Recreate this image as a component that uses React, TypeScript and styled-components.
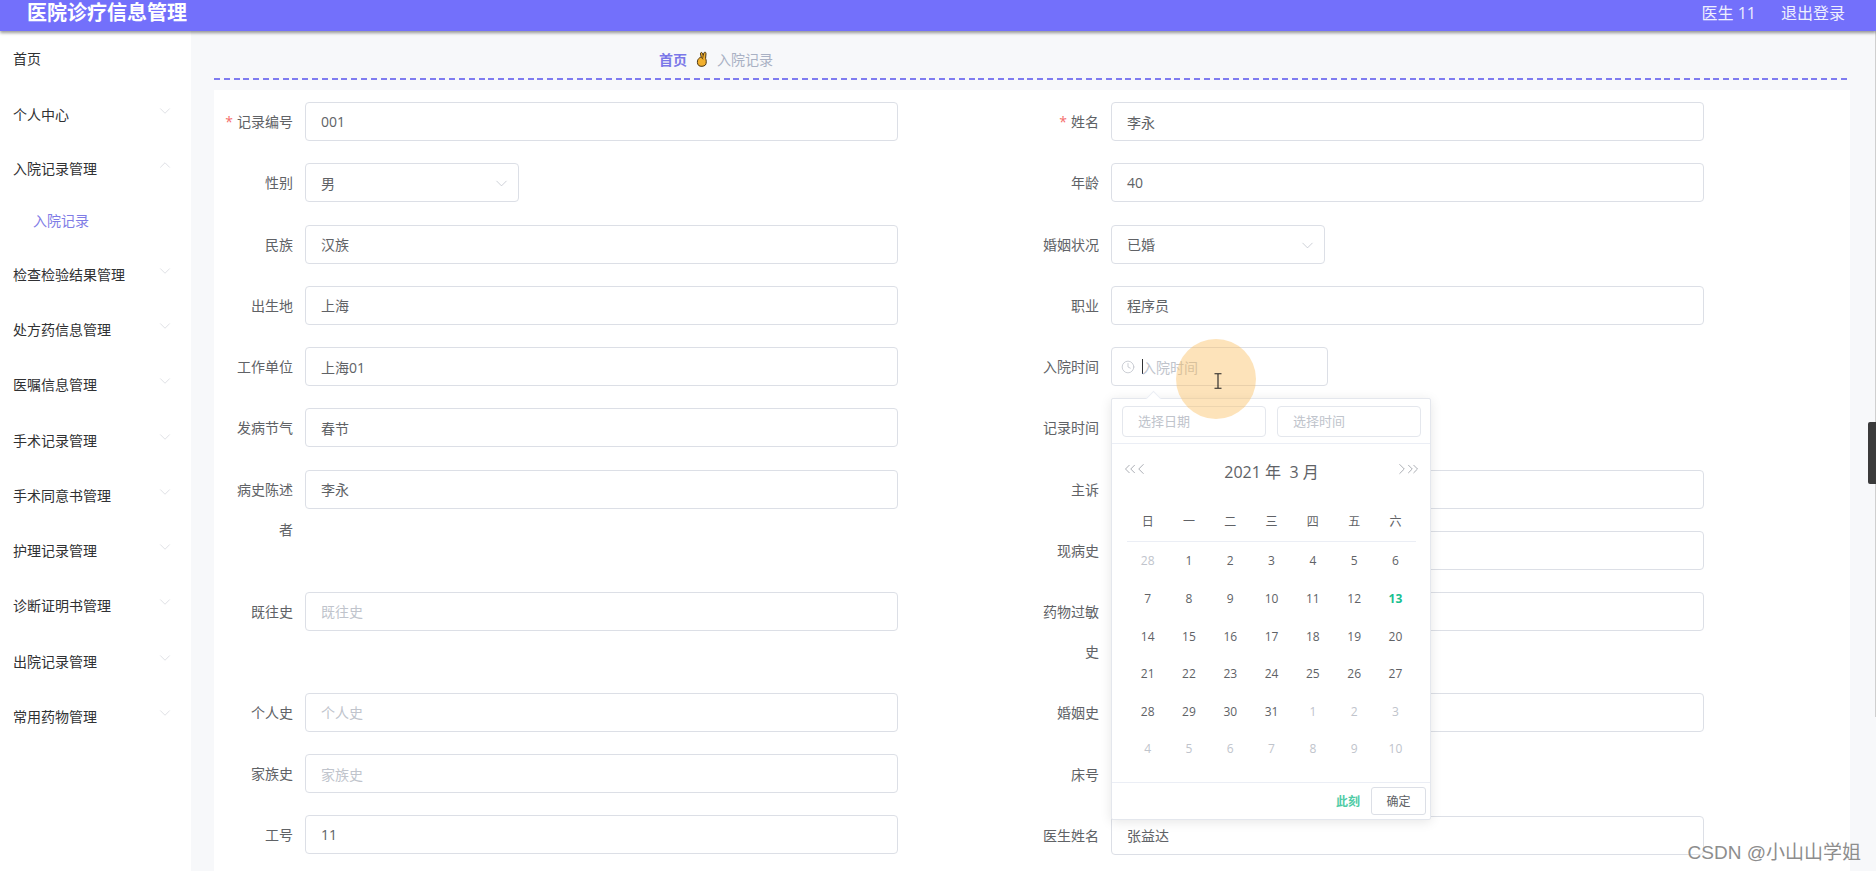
import React from 'react';
import styled, { createGlobalStyle } from 'styled-components';
import { ChevronDown, ChevronLeft, ChevronRight, ChevronsLeft, ChevronsRight, ChevronUp, Clock } from 'lucide-react';

const GlobalStyle = createGlobalStyle`
    html, body {
        margin: 0;
        padding: 0;
        background: #f7f8fa;
    }
    * {
        box-sizing: border-box;
    }
    body {
        font-family: "Open Sans", "Noto Sans CJK SC", sans-serif;
        font-size: 14px;
        color: #606266;
    }
`;

const Page = styled.div`
    position: relative;
    display: flex;
    flex-direction: column;
    height: 871px;
    overflow: hidden;
`;

const Header = styled.header`
    position: relative;
    z-index: 2;
    flex: none;
    display: flex;
    align-items: center;
    justify-content: space-between;
    height: 31px;
    padding: 0 31px 6px 27px;
    background: #7370fb;
    color: #fff;
    box-shadow: 0 2px 3px rgba(0, 0, 0, 0.4);
`;

const Title = styled.div`
    font-size: 20px;
    font-weight: 700;
    line-height: 25px;
`;

const HeaderLinks = styled.div`
    display: flex;
    gap: 25px;
    font-size: 16px;
    line-height: 22px;
    color: #eeeefe;
`;

const Body = styled.div`
    flex: 1;
    display: flex;
    min-height: 0;
`;

const Sidebar = styled.nav`
    flex: none;
    width: 191px;
    background: #fff;
`;

const MenuItem = styled.div<{ $height: number; $sub?: boolean }>`
    display: flex;
    align-items: center;
    justify-content: space-between;
    height: ${p => p.$height}px;
    padding: 0 17px 0 ${p => (p.$sub ? 33 : 13)}px;
    font-size: 14px;
    line-height: 22px;
    color: ${p => (p.$sub ? '#7f7ce6' : '#303133')};

    svg {
        margin-top: -8px;
        color: #d4d6dc;
    }
`;

const Main = styled.main`
    flex: 1;
    min-width: 0;
    padding: 0 26px 0 23px;
    background: #f7f8fa;
`;

const Breadcrumb = styled.div`
    display: flex;
    align-items: center;
    gap: 9px;
    height: 49px;
    padding: 6px 0 0 445px;
    background: repeating-linear-gradient(90deg, #7f7cf0 0 6px, transparent 6px 9.8px) left bottom / 100% 2px no-repeat;
    font-size: 14px;
`;

const CrumbHome = styled.span`
    font-weight: 700;
    color: #7a77e8;
`;

const CrumbCurrent = styled.span`
    color: #a9b1c4;
`;

const Card = styled.section`
    display: grid;
    grid-template-columns: 805px 805px;
    height: 800px;
    margin-top: 10px;
    padding-top: 12px;
    background: #fff;
`;

const Column = styled.div<{ $first?: boolean }>`
    display: flex;
    flex-direction: column;
    margin-left: ${p => (p.$first ? -1 : 0)}px;
`;

const Field = styled.div<{ $height?: number }>`
    display: flex;
    align-items: flex-start;
    flex: none;
    height: ${p => p.$height ?? 61.3}px;
    padding-left: 12px;
`;

const Label = styled.label`
    flex: none;
    width: 68px;
    margin-right: 12px;
    text-align: right;
    line-height: 40px;
    color: #606266;
`;

const Required = styled.span`
    margin-right: 4px;
    color: #f56c6c;
`;

const Control = styled.div<{ $width?: number }>`
    position: relative;
    flex: none;
    display: flex;
    align-items: center;
    width: ${p => p.$width ?? 593}px;
    height: 39px;
    padding: 0 15px;
    border: 1px solid #dcdfe6;
    border-radius: 4px;
    background: #fff;
    color: #606266;
`;

const Placeholder = styled.span`
    color: #c0c4cc;
`;

const SelectArrow = styled(ChevronDown)`
    position: absolute;
    right: 7px;
    top: 10px;
    color: #c0c4cc;
`;

const TimeWrap = styled.div`
    position: relative;
    z-index: 1;
`;

const TimeIcon = styled(Clock)`
    flex: none;
    margin: 0 7px 0 -6px;
    color: #c0c4cc;
`;

const Caret = styled.i`
    flex: none;
    width: 1px;
    height: 15px;
    margin-right: -1px;
    background: #303133;
`;

const Popover = styled.div`
    position: absolute;
    top: 51px;
    left: 0;
    width: 320px;
    height: 422px;
    border: 1px solid #e4e7ed;
    border-radius: 2px;
    background: #fff;
    box-shadow: 0 2px 12px rgba(0, 0, 0, 0.1);

    &::before {
        content: '';
        position: absolute;
        top: -6px;
        left: 36px;
        width: 10px;
        height: 10px;
        border-top: 1px solid #ebeef5;
        border-left: 1px solid #ebeef5;
        background: #fff;
        transform: rotate(45deg);
    }
`;

const PopoverInputs = styled.div`
    display: flex;
    justify-content: space-between;
    height: 45px;
    padding: 7px 9px 0 10px;
    border-bottom: 1px solid #ebeef5;
`;

const SmallInput = styled.div`
    width: 144px;
    height: 31px;
    padding: 0 15px;
    border: 1px solid #e4e7ed;
    border-radius: 4px;
    font-size: 13px;
    line-height: 28px;
    color: #c0c4cc;
`;

const MonthBar = styled.div`
    display: flex;
    align-items: center;
    justify-content: space-between;
    height: 56px;
    padding: 0 8px 3px 9px;
    font-size: 16px;
    color: #606266;
`;

const MonthLabel = styled.span`
    white-space: pre;
`;

const NavGroup = styled.div`
    display: flex;
    margin-top: -3px;
    color: #8f939b;

    svg + svg {
        margin-left: -7px;
    }
`;

const CalendarGrid = styled.div`
    display: grid;
    grid-template-columns: repeat(7, 41.3px);
    margin: 0 15px;
`;

const WeekDay = styled.div`
    display: flex;
    align-items: center;
    justify-content: center;
    height: 41px;
    margin-top: 1px;
    border-bottom: 1px solid #ebeef5;
    font-size: 12px;
    color: #606266;
`;

const Day = styled.div<{ $muted?: boolean; $today?: boolean }>`
    display: flex;
    align-items: center;
    justify-content: center;
    height: 37.6px;
    font-size: 12px;
    font-weight: ${p => (p.$today ? 700 : 400)};
    color: ${p => (p.$today ? '#19c08f' : p.$muted ? '#c0c4cc' : '#606266')};
`;

const PopoverFooter = styled.div`
    position: absolute;
    left: 0;
    right: 0;
    bottom: 0;
    display: flex;
    align-items: center;
    justify-content: flex-end;
    gap: 11px;
    height: 37px;
    padding-right: 4px;
    border-top: 1px solid #ebeef5;
`;

const NowLink = styled.span`
    font-size: 12px;
    font-weight: 700;
    color: #4fcba6;
`;

const ConfirmButton = styled.button`
    width: 55px;
    height: 28px;
    padding: 0;
    border: 1px solid #dcdfe6;
    border-radius: 3px;
    background: #fff;
    font-family: inherit;
    font-size: 12px;
    color: #606266;
`;

const ClickHalo = styled.div`
    position: absolute;
    top: -8px;
    left: 65px;
    width: 80px;
    height: 80px;
    border-radius: 50%;
    background: rgba(250, 188, 90, 0.42);
    pointer-events: none;
`;

const TextCursor = styled.svg`
    position: absolute;
    top: 26px;
    left: 103px;
`;

const Watermark = styled.div`
    position: absolute;
    right: 15px;
    bottom: 7px;
    font-family: "Liberation Sans", "Noto Sans CJK SC", sans-serif;
    font-size: 19px;
    line-height: 22px;
    color: #8d8d8d;
    text-shadow: 0 0 1px #fff;
`;

const ScrollTrack = styled.div`
    position: absolute;
    top: 31px;
    right: 0;
    width: 1px;
    height: 686px;
    background: #cfcfcf;
`;

const ScrollThumb = styled.div`
    position: absolute;
    top: 422px;
    right: 0;
    width: 8px;
    height: 62px;
    border-radius: 2px 0 0 2px;
    background: #3b3b3b;
`;

const menu = [
    { label: '首页', height: 55 },
    { label: '个人中心', height: 57, arrow: 'down' },
    { label: '入院记录管理', height: 51, arrow: 'up' },
    { label: '入院记录', height: 53, sub: true },
    { label: '检查检验结果管理', height: 55.3, arrow: 'down' },
    { label: '处方药信息管理', height: 55.3, arrow: 'down' },
    { label: '医嘱信息管理', height: 55.3, arrow: 'down' },
    { label: '手术记录管理', height: 55.3, arrow: 'down' },
    { label: '手术同意书管理', height: 55.3, arrow: 'down' },
    { label: '护理记录管理', height: 55.3, arrow: 'down' },
    { label: '诊断证明书管理', height: 55.3, arrow: 'down' },
    { label: '出院记录管理', height: 55.3, arrow: 'down' },
    { label: '常用药物管理', height: 55.3, arrow: 'down' },
];

type FormItem = {
    label: string;
    value?: string;
    placeholder?: string;
    required?: boolean;
    select?: boolean;
    narrow?: boolean;
    height?: number;
    picker?: boolean;
};

const leftItems: FormItem[] = [
    { label: '记录编号', value: '001', required: true },
    { label: '性别', value: '男', select: true },
    { label: '民族', value: '汉族' },
    { label: '出生地', value: '上海' },
    { label: '工作单位', value: '上海01' },
    { label: '发病节气', value: '春节' },
    { label: '病史陈述者', value: '李永', height: 122 },
    { label: '既往史', placeholder: '既往史', height: 101 },
    { label: '个人史', placeholder: '个人史' },
    { label: '家族史', placeholder: '家族史' },
    { label: '工号', value: '11' },
];

const rightItems: FormItem[] = [
    { label: '姓名', value: '李永', required: true },
    { label: '年龄', value: '40' },
    { label: '婚姻状况', value: '已婚', select: true },
    { label: '职业', value: '程序员' },
    { label: '入院时间', picker: true },
    { label: '记录时间', narrow: true },
    { label: '主诉' },
    { label: '现病史' },
    { label: '药物过敏史', height: 101 },
    { label: '婚姻史' },
    { label: '床号', narrow: true },
    { label: '医生姓名', value: '张益达' },
];

const weekDays = ['日', '一', '二', '三', '四', '五', '六'];

// 2021-03 as the picker shows it, 42 cells starting on Feb 28
const calendarDays = Array.from({ length: 42 }, (_, i) => {
    if (i === 0) return { n: 28, muted: true };
    if (i <= 31) return { n: i, muted: false };
    return { n: i - 31, muted: true };
});

const CrossedFingers = () => (
    <svg width="12" height="16" viewBox="0 0 12 16">
        <path
            d="M2 8.5C1 10 1.2 13 2.6 14.4 4 15.8 8 15.6 9.4 14 10.6 12.6 10.4 9 9.6 7.4L10 2.6C10.1 1 8.4.6 7.9 2L7.2 4.4 6.4 2.2C5.8.8 4.2 1.4 4.5 2.9L5.2 6.2C4 6.3 3 7 2 8.5Z"
            fill="#f2b02e"
            stroke="#4a3512"
            strokeWidth="1"
            strokeLinejoin="round"
        />
        <path d="M5.2 6.2 7 8.4M7.2 4.4 6.6 7.6" fill="none" stroke="#4a3512" strokeWidth="0.8" />
    </svg>
);

const DatePicker = () => (
    <Popover>
        <PopoverInputs>
            <SmallInput>选择日期</SmallInput>
            <SmallInput>选择时间</SmallInput>
        </PopoverInputs>
        <MonthBar>
            <NavGroup>
                <ChevronsLeft size={18} strokeWidth={1} />
                <ChevronLeft size={18} strokeWidth={1} />
            </NavGroup>
            <MonthLabel>2021 年  3 月</MonthLabel>
            <NavGroup>
                <ChevronRight size={18} strokeWidth={1} />
                <ChevronsRight size={18} strokeWidth={1} />
            </NavGroup>
        </MonthBar>
        <CalendarGrid>
            {weekDays.map(d => (
                <WeekDay key={d}>{d}</WeekDay>
            ))}
            {calendarDays.map((d, i) => (
                <Day key={i} $muted={d.muted} $today={!d.muted && d.n === 13}>
                    {d.n}
                </Day>
            ))}
        </CalendarGrid>
        <PopoverFooter>
            <NowLink>此刻</NowLink>
            <ConfirmButton>确定</ConfirmButton>
        </PopoverFooter>
    </Popover>
);

const FormField = ({ item }: { item: FormItem }) => (
    <Field $height={item.height}>
        <Label>
            {item.required && <Required>*</Required>}
            {item.label}
        </Label>
        {item.picker ? (
            <TimeWrap>
                <Control $width={217}>
                    <TimeIcon size={14} strokeWidth={1.4} />
                    <Caret />
                    <Placeholder>入院时间</Placeholder>
                </Control>
                <DatePicker />
                <ClickHalo />
                <TextCursor width="8" height="16" viewBox="0 0 8 16">
                    <path d="M.5.8h7M.5 15.2h7M4 .8v14.4" fill="none" stroke="#222" strokeWidth="1.1" />
                </TextCursor>
            </TimeWrap>
        ) : (
            <Control $width={item.select || item.narrow ? 214 : undefined}>
                {item.value ? item.value : item.placeholder && <Placeholder>{item.placeholder}</Placeholder>}
                {item.select && <SelectArrow size={19} strokeWidth={1} />}
            </Control>
        )}
    </Field>
);

const App = () => (
    <Page>
        <GlobalStyle />
        <Header>
            <Title>医院诊疗信息管理</Title>
            <HeaderLinks>
                <span>医生 11</span>
                <span>退出登录</span>
            </HeaderLinks>
        </Header>
        <Body>
            <Sidebar>
                {menu.map(m => (
                    <MenuItem key={m.label + m.height} $height={m.height} $sub={m.sub}>
                        {m.label}
                        {m.arrow === 'down' && <ChevronDown size={18} strokeWidth={1} />}
                        {m.arrow === 'up' && <ChevronUp size={18} strokeWidth={1} />}
                    </MenuItem>
                ))}
            </Sidebar>
            <Main>
                <Breadcrumb>
                    <CrumbHome>首页</CrumbHome>
                    <CrossedFingers />
                    <CrumbCurrent>入院记录</CrumbCurrent>
                </Breadcrumb>
                <Card>
                    <Column $first>
                        {leftItems.map(item => (
                            <FormField key={item.label} item={item} />
                        ))}
                    </Column>
                    <Column>
                        {rightItems.map(item => (
                            <FormField key={item.label} item={item} />
                        ))}
                    </Column>
                </Card>
            </Main>
        </Body>
        <ScrollTrack />
        <ScrollThumb />
        <Watermark>CSDN @小山山学姐</Watermark>
    </Page>
);

export default App;
